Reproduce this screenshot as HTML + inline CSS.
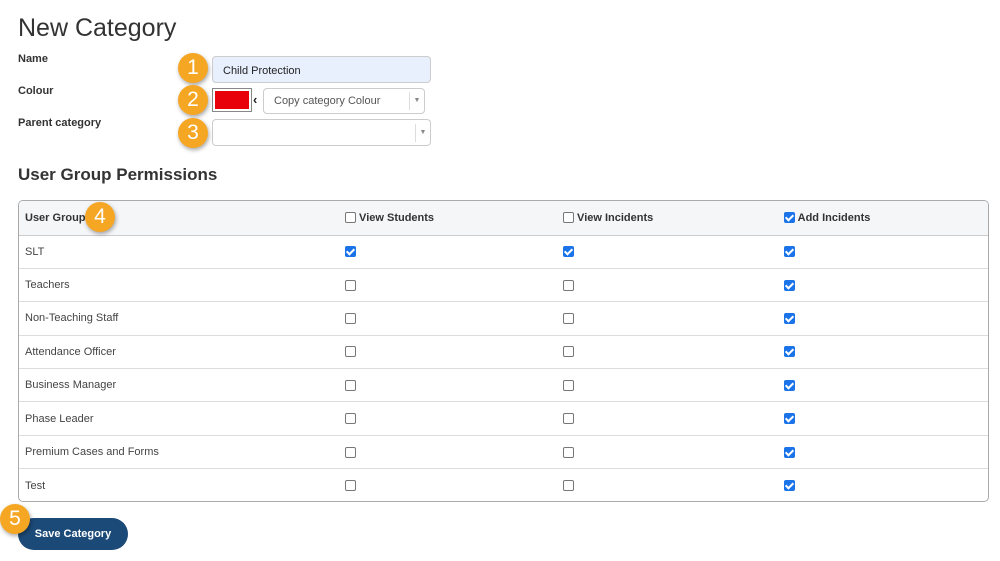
<!DOCTYPE html><html><head><style>
body{margin:0;width:1000px;height:561px;background:#fff;font-family:"Liberation Sans",sans-serif;position:relative;overflow:hidden;color:#333}
.a{position:absolute}
.lbl{font-size:11px;font-weight:bold;color:#333}
.badge{position:absolute;width:30px;height:30px;border-radius:50%;background:#f5a623;color:#fff;font-size:21px;text-align:center;line-height:30px;box-shadow:1px 2px 4px rgba(0,0,0,.35)}
.inp{position:absolute;border:1px solid #ccc;border-radius:4px;background:#fff;box-sizing:border-box}
table{border-collapse:collapse;width:100%}
.tbl{position:absolute;left:18px;top:200px;width:971px;height:302px;border:1px solid #aaa;border-radius:5px;overflow:hidden;box-sizing:border-box}
td{height:33.4px;border-top:1px solid #ddd;font-size:11px;color:#444;padding:0 0 0 6px;box-sizing:border-box}
tr:first-child td{border-top:none;background:#f5f6f8;font-weight:bold;color:#333;height:34px;border-bottom:1px solid #ccc}
.cb{display:inline-block;width:9px;height:9px;border:1px solid #777;border-radius:2px;vertical-align:middle;background:#fff}
.ck{display:inline-block;width:11px;height:11px;border-radius:2px;background:#1a73e8;vertical-align:middle;position:relative}
.ck:after{content:"";position:absolute;left:3px;top:1px;width:3px;height:6px;border:solid #fff;border-width:0 2px 2px 0;transform:rotate(45deg)}
</style></head><body>
<div class="a" style="left:18px;top:14px;font-size:25px;color:#333">New Category</div>
<div class="a lbl" style="left:18px;top:53px">Name</div>
<div class="a lbl" style="left:18px;top:85px">Colour</div>
<div class="a lbl" style="left:18px;top:117px">Parent category</div>
<div class="inp" style="left:212px;top:56px;width:219px;height:27px;background:#e8f0fe;font-size:11px;padding:8px 10px;color:#222">Child Protection</div>
<div class="a" style="left:212px;top:88px;width:40px;height:24px;border:1px solid #888;box-sizing:border-box;background:#fff;padding:2px"><div style="background:#e8000b;height:100%"></div></div>
<div class="a" style="left:253px;top:92px;font-size:13px;font-weight:bold;color:#222">‹</div>
<div class="inp" style="left:263px;top:88px;width:162px;height:26px;font-size:11px;color:#555;padding:6px 10px">Copy category Colour<span style="position:absolute;right:0;top:3px;height:18px;border-left:1px solid #ddd;width:14px;font-size:7px;color:#888;text-align:center;line-height:18px">▼</span></div>
<div class="inp" style="left:212px;top:119px;width:219px;height:27px"><span style="position:absolute;right:0;top:4px;height:18px;border-left:1px solid #ddd;width:14px;font-size:7px;color:#888;text-align:center;line-height:18px">▼</span></div>
<div class="a" style="left:18px;top:165px;font-size:17px;font-weight:bold;color:#333">User Group Permissions</div>
<div class="tbl"><table>
<tr><td style="width:320px">User Group</td><td style="width:218px"><span class="cb"></span> View Students</td><td style="width:221px"><span class="cb"></span> View Incidents</td><td><span class="ck"></span> Add Incidents</td></tr>
<tr><td>SLT</td><td><span class="ck"></span></td><td><span class="ck"></span></td><td><span class="ck"></span></td></tr>
<tr><td>Teachers</td><td><span class="cb"></span></td><td><span class="cb"></span></td><td><span class="ck"></span></td></tr>
<tr><td>Non-Teaching Staff</td><td><span class="cb"></span></td><td><span class="cb"></span></td><td><span class="ck"></span></td></tr>
<tr><td>Attendance Officer</td><td><span class="cb"></span></td><td><span class="cb"></span></td><td><span class="ck"></span></td></tr>
<tr><td>Business Manager</td><td><span class="cb"></span></td><td><span class="cb"></span></td><td><span class="ck"></span></td></tr>
<tr><td>Phase Leader</td><td><span class="cb"></span></td><td><span class="cb"></span></td><td><span class="ck"></span></td></tr>
<tr><td>Premium Cases and Forms</td><td><span class="cb"></span></td><td><span class="cb"></span></td><td><span class="ck"></span></td></tr>
<tr><td>Test</td><td><span class="cb"></span></td><td><span class="cb"></span></td><td><span class="ck"></span></td></tr>
</table></div>
<div class="a" style="left:18px;top:518px;width:110px;height:32px;border-radius:16px;background:#1c4a78;color:#fff;font-size:11px;font-weight:bold;text-align:center;line-height:32px">Save Category</div>
<div class="badge" style="left:178px;top:53px">1</div>
<div class="badge" style="left:178px;top:85px">2</div>
<div class="badge" style="left:178px;top:118px">3</div>
<div class="badge" style="left:85px;top:202px">4</div>
<div class="badge" style="left:0px;top:504px">5</div>
</body></html>
